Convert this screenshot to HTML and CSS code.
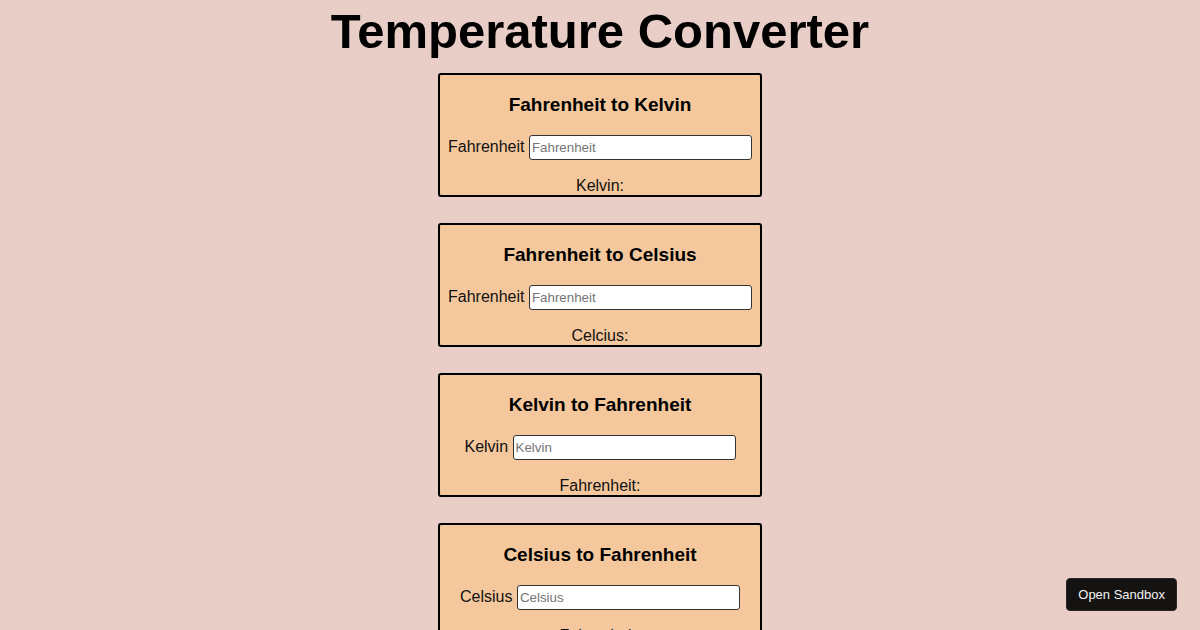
FILE: index.html
```html
<!DOCTYPE html>
<html>
<head>
<meta charset="utf-8">
<title>Temperature Converter</title>
<link rel="stylesheet" href="styles.css">
</head>
<body>
<h1 class="title">Temperature Converter</h1>
<div class="cards">
  <div class="card">
    <h3 class="card-title">Fahrenheit to Kelvin</h3>
    <div class="row"><label class="lbl">Fahrenheit</label> <input class="field" type="text" placeholder="Fahrenheit"></div>
    <p class="result">Kelvin:</p>
  </div>
  <div class="card">
    <h3 class="card-title">Fahrenheit to Celsius</h3>
    <div class="row"><label class="lbl">Fahrenheit</label> <input class="field" type="text" placeholder="Fahrenheit"></div>
    <p class="result">Celcius:</p>
  </div>
  <div class="card">
    <h3 class="card-title">Kelvin to Fahrenheit</h3>
    <div class="row"><label class="lbl">Kelvin</label> <input class="field" type="text" placeholder="Kelvin"></div>
    <p class="result">Fahrenheit:</p>
  </div>
  <div class="card">
    <h3 class="card-title">Celsius to Fahrenheit</h3>
    <div class="row"><label class="lbl">Celsius</label> <input class="field" type="text" placeholder="Celsius"></div>
    <p class="result">Fahrenheit:</p>
  </div>
</div>
<button class="sandbox-btn">Open Sandbox</button>
</body>
</html>
```
FILE: styles.css
```css
html, body {
  margin: 0;
  padding: 0;
}
body {
  background: #e8cec7;
  font-family: "Liberation Sans", Arial, sans-serif;
  color: #000;
  overflow: hidden;
  height: 630px;
}
.title {
  font-size: 49px;
  font-weight: bold;
  text-align: center;
  margin: 3px 0 14px;
}
.cards {
  display: flex;
  flex-direction: column;
  align-items: center;
  gap: 26px;
}
.card {
  box-sizing: border-box;
  width: 324px;
  height: 124px;
  flex-shrink: 0;
  background: #f4c89c;
  border: 2px solid #000;
  border-radius: 3px;
  text-align: center;
  overflow: hidden;
}
.card-title {
  font-size: 19px;
  font-weight: bold;
  margin: 18.5px 0 19.5px;
}
.row {
  font-size: 16px;
}
.lbl {
  color: #111;
}
.field {
  box-sizing: border-box;
  width: 223px;
  height: 25px;
  margin: 0;
  padding: 1px 2px;
  border: 1px solid #333;
  border-radius: 3px;
  background: #fff;
  font-family: "Liberation Sans", Arial, sans-serif;
  font-size: 13.33px;
  outline: none;
}
.field::placeholder {
  color: #757575;
}
.result {
  font-size: 16px;
  margin: 17px 0 0;
  color: #111;
}
.sandbox-btn {
  position: fixed;
  right: 23px;
  bottom: 19px;
  height: 33px;
  padding: 0 11px;
  background: #151312;
  color: #f2f2f2;
  border: 1px solid #2a2826;
  border-radius: 4px;
  font-family: "Liberation Sans", Arial, sans-serif;
  font-size: 13px;
}
```
